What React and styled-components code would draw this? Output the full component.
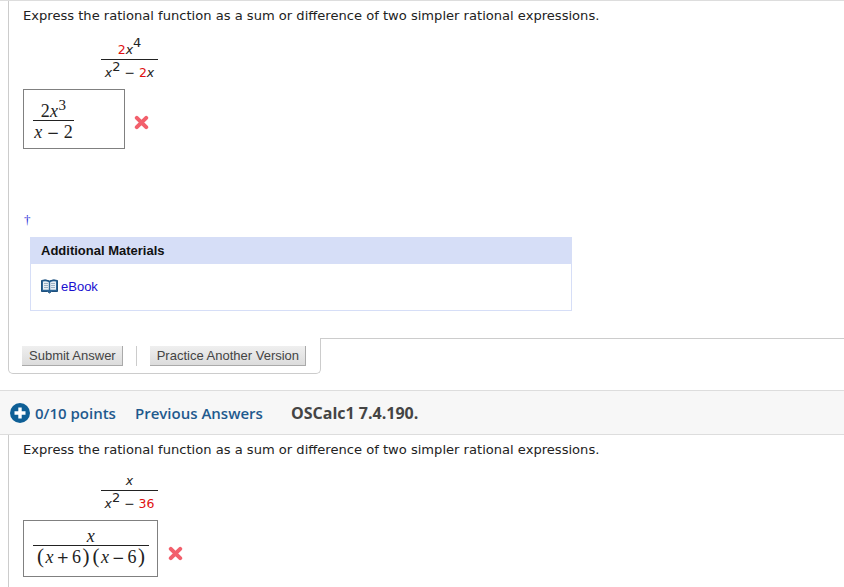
import React from "react";
import styled, { createGlobalStyle } from "styled-components";

const Global = createGlobalStyle`
  html, body { margin: 0; padding: 0; background: #fff; overflow: hidden; }
  body { font-family: "DejaVu Sans", Verdana, sans-serif; }
`;
const Page = styled.div`
  width: 844px; height: 587px; overflow: hidden; display: flex; flex-direction: column;
  & > * { flex: none; }
`;
const TopRule = styled.div`height: 1px; background: #ddd;`;
const Body = styled.div`
  margin-left: 8px; border-left: 1px solid #ccc; padding-left: 14px;
  height: ${p => p.$h}px; box-sizing: border-box;
`;
const Prompt = styled.p`
  margin: 0; padding-top: 7px; font-size: 13.09px; line-height: 16px; color: #222;
`;
const Display = styled.div`margin: ${p => p.$top}px 0 0 78px; display: flex;`;
const Frac = styled.span`display: inline-flex; flex-direction: column; align-items: center;`;
const Num = styled.span`
  display: block; text-align: center; font-size: 12.5px; line-height: 16px; padding-bottom: 1px; color: #222;
`;
const Den = styled.span`display: block; text-align: center; font-size: 12.5px; line-height: 16px; padding-top: 5px; color: #222;`;
const Bar = styled.span`display: block; align-self: stretch; height: 1px; background: #222; width: ${p => p.$w ? p.$w + "px" : "auto"};`;
const Var = styled.i`font-style: italic;`;
const Red = styled.span`color: #e01010;`;
const Sup = styled.sup`font-size: ${p => p.$size}px; line-height: 0; vertical-align: ${p => p.$lift}px; font-style: normal;`;
const AnswerRow = styled.div`display: flex; align-items: center; margin-top: 8px;`;
const AnswerBox = styled.div`
  width: ${p => p.$w}px; height: ${p => p.$h}px; box-sizing: border-box; border: 1px solid #808080;
  display: flex; padding: ${p => p.$pt || 0}px 0 ${p => p.$pb || 0}px 9px; align-items: center;
`;
const MathFrac = styled(Frac)`font-family: "Liberation Serif", "Times New Roman", serif; font-size: 18px; color: #222;`;
const MathNum = styled.span`display: block; line-height: 18px; letter-spacing: .3px;`;
const MathDen = styled.span`display: block; line-height: 18px; padding-top: 2px; white-space: nowrap;`;
const Op = styled.span`font-family: "DejaVu Sans", sans-serif; font-size: 15px; margin: 0 ${p => p.$gap}px;`;
const Paren = styled.span`font-size: 21px; line-height: 0; margin: 0 ${p => p.$gap}px; font-weight: 300;`;
const Wrong = styled.svg`width: 15px; height: 15px; margin-left: ${p => p.$ml}px; margin-top: ${p => p.$mt}px; flex: none;`;
const Dagger = styled.div`margin: 63px 0 0 1px; height: 15px; font-family: "Liberation Serif", serif; font-size: 13px; line-height: 15px; color: #2a2ad8;`;
const Materials = styled.section`margin: 10px 0 0 7px; width: 542px; font-family: "Liberation Sans", Arial, sans-serif; font-size: 13px;`;
const MatHead = styled.h3`margin: 0; height: 27px; line-height: 27px; padding-left: 11px; background: #d6def7; font-size: 13px; font-weight: bold; color: #111;`;
const MatBody = styled.div`
  height: 47px; box-sizing: border-box; border: 1px solid #d6def7; border-top: 0;
  display: flex; align-items: center; gap: 3px; padding: 0 0 1px 10px;
`;
const BookIcon = styled.svg`width: 17px; height: 15px; flex: none;`;
const EbookLink = styled.a`color: #1a10d0; text-decoration: none; font-size: 13px;`;
const ActionRow = styled.div`display: flex; align-items: flex-start;`;
const ActionTab = styled.div`
  margin-left: 8px; width: 313px; height: 36px; box-sizing: border-box;
  border: 1px solid #ccc; border-top: 0; border-radius: 0 0 5px 5px;
  display: flex; align-items: flex-start; padding: 8px 0 0 13px;
`;
const ActionFill = styled.div`flex: 1; border-top: 1px solid #ccc;`;
const Btn = styled.button`
  height: 20px; padding: 0 6px 0 7px; box-sizing: border-box; margin: 0;
  border: 0; border-right: 1px solid #aaa; border-bottom: 1px solid #aaa;
  background: linear-gradient(#efefef, #dcdcdc); color: #444;
  font-family: "Liberation Sans", Arial, sans-serif; font-size: 13px; line-height: 17px;
  white-space: nowrap;
`;
const Divider = styled.span`width: 1px; height: 20px; background: #ccc; margin: 0 13px;`;
const QHead = styled.header`
  margin-top: 16px; height: 45px; box-sizing: border-box; background: #f7f7f7;
  border-top: 1px solid #ddd; border-bottom: 1px solid #ddd;
  display: flex; align-items: center; padding-left: 10px;
  font-family: "Open Sans", sans-serif; font-size: 15px; font-weight: 600;
`;
const Plus = styled.svg`width: 20px; height: 20px; flex: none;`;
const Points = styled.span`color: #1f5a8e; margin-left: 5px; width: 100px;`;
const Prev = styled.span`color: #1f5a8e; width: 156px;`;
const Code = styled.span`color: #444; font-weight: 700; font-size: 16px;`;

const Cross = ({ ml, mt }) => (
  <Wrong $ml={ml} $mt={mt} viewBox="0 0 15 15">
    <path d="M2.8 2.8 12.2 12.2M12.2 2.8 2.8 12.2" stroke="#f2606c" strokeWidth="4" strokeLinecap="round" />
  </Wrong>
);

const Book = () => (
  <BookIcon viewBox="0 0 17 15">
    <path d="M.5 1.5Q4.5 0 8.5 2 12.5 0 16.5 1.5V12.5H10.5L8.5 14 6.5 12.5H.5Z" fill="#2a6496" stroke="#1d4f7c" />
    <path d="M2 2.6Q5 1.8 7.8 3.2V10.8H2ZM9.2 3.2Q12 1.8 15 2.6V10.8H9.2Z" fill="#e8eef3" />
    <path d="M3 4.5H7M3 6.5H7M3 8.5H7M10 4.5H14M10 6.5H14M10 8.5H14" stroke="#9db2c4" />
  </BookIcon>
);

const PROMPT = "Express the rational function as a sum or difference of two simpler rational expressions.";

export default function App() {
  return (
    <Page>
      <Global />
      <TopRule />
      <Body $h={337}>
        <Prompt>{PROMPT}</Prompt>
        <Display $top={18}>
          <Frac>
            <Num><Red>2</Red><Var>x</Var><Sup $size={13} $lift={7}>4</Sup></Num>
            <Bar $w={57} />
            <Den><Var>x</Var><Sup $size={13} $lift={6}>2</Sup> − <Red>2</Red><Var>x</Var></Den>
          </Frac>
        </Display>
        <AnswerRow>
          <AnswerBox $w={102} $h={60} $pt={6}>
            <MathFrac>
              <MathNum>2<Var>x</Var><Sup $size={15} $lift={7}>3</Sup></MathNum>
              <Bar $w={41} />
              <MathDen><Var>x</Var><Op $gap={4.5}>−</Op>2</MathDen>
            </MathFrac>
          </AnswerBox>
          <Cross ml={9} mt={6} />
        </AnswerRow>
        <Dagger>†</Dagger>
        <Materials>
          <MatHead>Additional Materials</MatHead>
          <MatBody>
            <Book />
            <EbookLink href="#">eBook</EbookLink>
          </MatBody>
        </Materials>
      </Body>
      <ActionRow>
        <ActionTab>
          <Btn>Submit Answer</Btn>
          <Divider />
          <Btn>Practice Another Version</Btn>
        </ActionTab>
        <ActionFill />
      </ActionRow>
      <QHead>
        <Plus viewBox="0 0 20 20">
          <circle cx="10" cy="10" r="10" fill="#0e5f96" />
          <path d="M10 4.5V15.5M4.5 10H15.5" stroke="#fff" strokeWidth="3.4" />
        </Plus>
        <Points>0/10 points</Points>
        <Prev>Previous Answers</Prev>
        <Code>OSCalc1 7.4.190.</Code>
      </QHead>
      <Body $h={153}>
        <Prompt>{PROMPT}</Prompt>
        <Display $top={15}>
          <Frac>
            <Num><Var>x</Var></Num>
            <Bar $w={57} />
            <Den><Var>x</Var><Sup $size={13} $lift={6}>2</Sup> − <Red>36</Red></Den>
          </Frac>
        </Display>
        <AnswerRow>
          <AnswerBox $w={135} $h={57} $pb={4}>
            <MathFrac>
              <MathNum><Var>x</Var></MathNum>
              <Bar $w={116} />
              <MathDen>
                <Paren $gap={1.5}>(</Paren><Var>x</Var><Op $gap={3}>+</Op>6<Paren $gap={1.5}>)</Paren>
                <Paren $gap={1.5}>(</Paren><Var>x</Var><Op $gap={3}>−</Op>6<Paren $gap={1.5}>)</Paren>
              </MathDen>
            </MathFrac>
          </AnswerBox>
          <Cross ml={10} mt={9} />
        </AnswerRow>
      </Body>
    </Page>
  );
}
